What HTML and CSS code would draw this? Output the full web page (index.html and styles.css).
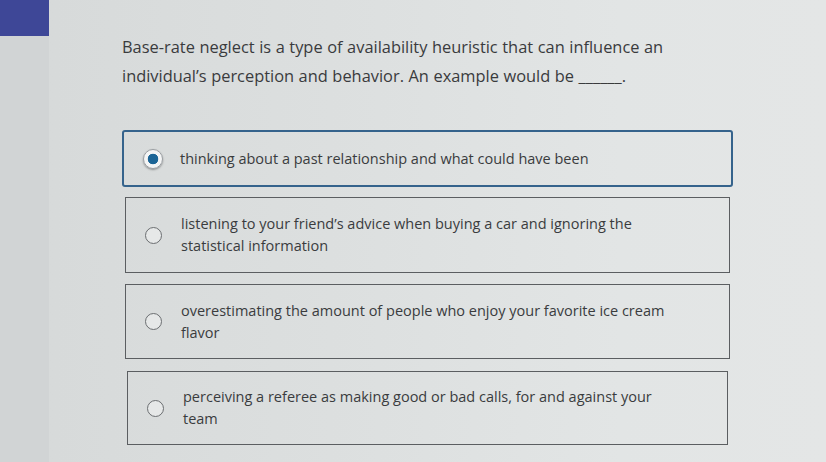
FILE: index.html
```html
<!DOCTYPE html>
<html lang="en">
<head>
<meta charset="utf-8">
<title>Question</title>
<link rel="stylesheet" href="styles.css">
</head>
<body>
<div class="page">
  <aside class="rail">
    <div class="rail-tab"></div>
  </aside>
  <main class="quiz">
    <p class="prompt">Base-rate neglect is a type of availability heuristic that can influence an individual’s perception and behavior. An example would be ______.</p>
    <ul class="choices">
      <li class="choice choice-selected">
        <span class="radio radio-on"></span>
        <span class="label">thinking about a past relationship and what could have been</span>
      </li>
      <li class="choice choice-b">
        <span class="radio"></span>
        <span class="label">listening to your friend’s advice when buying a car and ignoring the statistical information</span>
      </li>
      <li class="choice choice-c">
        <span class="radio"></span>
        <span class="label">overestimating the amount of people who enjoy your favorite ice cream flavor</span>
      </li>
      <li class="choice choice-d">
        <span class="radio"></span>
        <span class="label">perceiving a referee as making good or bad calls, for and against your team</span>
      </li>
    </ul>
  </main>
</div>
</body>
</html>
```
FILE: styles.css
```css
html, body {
  margin: 0;
  height: 100%;
}

body {
  font-family: "Open Sans", "Noto Sans", sans-serif;
  color: #3b3d3f;
  background: linear-gradient(90deg, #d6d9d9 0%, #dcdfdf 40%, #e2e5e5 75%, #e4e6e6 100%);
  overflow: hidden;
}

.page {
  display: flex;
  height: 462px;
}

.rail {
  width: 49px;
  flex: none;
  background: #d1d4d5;
}

.rail-tab {
  height: 36px;
  background: #3e4797;
}

.quiz {
  flex: 1;
  padding: 32px 0 0 73px;
}

.prompt {
  margin: 0;
  width: 560px;
  font-size: 16.4px;
  line-height: 29px;
  color: #3a3b3d;
  word-spacing: 0.3px;
}

.choices {
  list-style: none;
  margin: 40px 0 0;
  padding: 0;
  display: flex;
  flex-direction: column;
  gap: 10px;
}

.choice {
  display: flex;
  align-items: center;
  gap: 19px;
  width: 605px;
  box-sizing: border-box;
  border: 1px solid #5b5e61;
  padding: 8px 20px 8px 19px;
  font-size: 14.5px;
  line-height: 22px;
  color: #3a3c3e;
}

.choice-selected {
  width: 611px;
  height: 57px;
  border: 2px solid #35638c;
  border-radius: 3px;
  padding-left: 19px;
  gap: 17px;
}

.choice-b {
  margin-left: 3px;
  height: 76px;
}

.choice-c {
  margin-left: 3px;
  margin-top: 1px;
  height: 75px;
}

.choice-d {
  margin-left: 5px;
  margin-top: 2px;
  width: 601px;
  height: 74px;
}

.label {
  max-width: 490px;
}

.radio {
  flex: none;
  width: 17px;
  height: 17px;
  box-sizing: border-box;
  border: 1.3px solid #6b6e71;
  border-radius: 50%;
  background: #e6e8e8;
}

.radio-on {
  width: 20px;
  height: 20px;
  border: 1px solid #9a9ea2;
  background: radial-gradient(circle, #1c6596 0 5px, #f4f5f5 5.6px);
  box-shadow: 0 1px 2px rgba(0, 0, 0, 0.35);
}
```
